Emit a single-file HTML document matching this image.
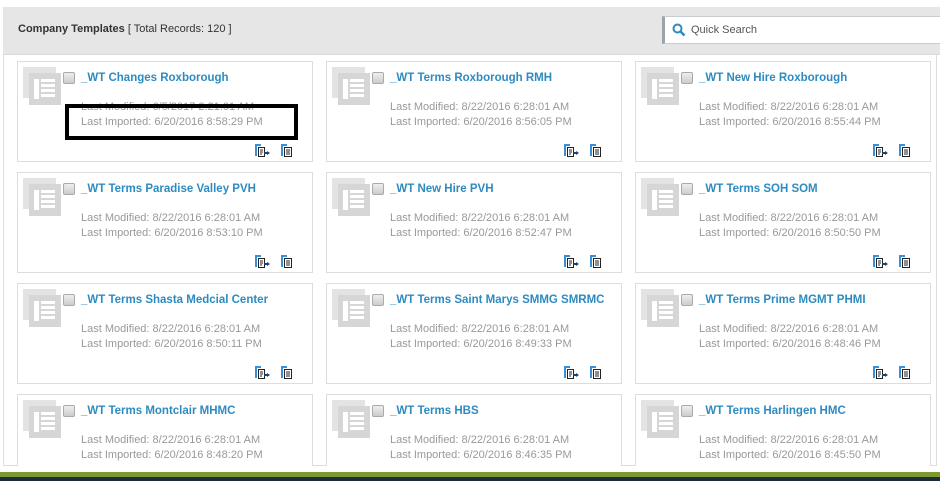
<!DOCTYPE html>
<html><head><meta charset="utf-8"><style>
*{margin:0;padding:0;box-sizing:border-box}
body{width:940px;height:481px;overflow:hidden;background:#fff;font-family:"Liberation Sans",sans-serif;position:relative}
.panel{position:absolute;left:3px;top:7px;width:934px;height:459px;border:1px solid #ddd;border-top:none;background:#fff}
.hdr{position:absolute;left:3px;top:7px;width:937px;height:48px;background:#e6e6e6;border-bottom:1px solid #d8d8d8}
.hdr .t{position:absolute;left:15px;top:16px;font-size:11px;color:#333}
.hdr b{color:#333}
.search{position:absolute;left:662px;top:16px;width:280px;height:28px;background:#fff;border:1px solid #c9cdd0;border-left:3px solid #9aa4ab}
.search span{position:absolute;left:26px;top:7px;font-size:11px;color:#555}
.card{position:absolute;width:296px;height:101px;border:1px solid #ddd;background:#fff}
.b1{position:absolute;left:5px;top:5px;width:33px;height:31px;background:#e3e3e3}
.b2{position:absolute;left:11px;top:11px;width:32px;height:32px;background:#d6d6d6}
.b2::before{content:"";position:absolute;left:5px;top:6px;width:5px;height:20px;background:#fff}
.b2::after{content:"";position:absolute;left:12px;top:6px;width:14px;height:20px;background:repeating-linear-gradient(#fff 0 3px,#d6d6d6 3px 5px)}
.cb{position:absolute;left:45px;top:10px;width:12px;height:12px;border:1px solid #aaa;border-radius:2px;background:linear-gradient(#eee,#ccc)}
.ti{position:absolute;left:63px;top:10px;font-size:11.5px;font-weight:bold;color:#2e8bc0;white-space:nowrap}
.m{position:absolute;left:63px;top:38px;font-size:11px;color:#999;line-height:15px;white-space:nowrap}
.ic{position:absolute;top:82px}
.green{position:absolute;left:0;top:472px;width:940px;height:5px;background:#7b9a32}
.dark{position:absolute;left:0;top:477px;width:940px;height:4px;background:#1f2b37}
.box{position:absolute;left:65px;top:104px;width:233px;height:36px;border:4px solid #000}
</style></head><body>
<div class="panel"></div>
<div class="hdr"><div class="t"><b>Company Templates</b> [ Total Records: 120 ]</div></div>
<div class="search"><svg style="position:absolute;left:7px;top:6px" width="14" height="14" viewBox="0 0 14 14"><circle cx="5.5" cy="5.5" r="4" fill="none" stroke="#2e8bc0" stroke-width="2"/><path d="M8.5 8.5L12.5 12.5" stroke="#2e8bc0" stroke-width="2.5"/></svg><span>Quick Search</span></div>

<svg width="0" height="0" style="position:absolute"><defs>
<g id="i1"><path d="M0 0h6v2H2v10H0z" fill="#3b8fd8"/><path d="M3.5 3.5h6v9h-6z" fill="#fff" stroke="#222" stroke-width="1"/><path d="M5 6h3M5 8h3M5 10h2" stroke="#222"/><path d="M9 9h4" stroke="#1f3f7a" stroke-width="2"/><path d="M12 7l3 2-3 2z" fill="#1f3f7a"/></g>
<g id="i2"><path d="M0 0h6v2H2v10H0z" fill="#3b8fd8"/><path d="M3.5 3.5h7v9h-7z" fill="#fff" stroke="#222"/><path d="M5 6h4M5 8h4M5 10h4" stroke="#222"/></g>
</defs></svg>

<div class="card" style="left:17px;top:61px"><div class="b1"></div><div class="b2"></div><div class="cb"></div><div class="ti">_WT Changes Roxborough</div><div class="m">Last Modified: 6/5/2017 2:21:01 AM<br>Last Imported: 6/20/2016 8:58:29 PM</div><svg class="ic" style="left:237px" width="16" height="13"><use href="#i1"/></svg><svg class="ic" style="left:263px" width="12" height="13"><use href="#i2"/></svg></div>
<div class="card" style="left:326px;top:61px"><div class="b1"></div><div class="b2"></div><div class="cb"></div><div class="ti">_WT Terms Roxborough RMH</div><div class="m">Last Modified: 8/22/2016 6:28:01 AM<br>Last Imported: 6/20/2016 8:56:05 PM</div><svg class="ic" style="left:237px" width="16" height="13"><use href="#i1"/></svg><svg class="ic" style="left:263px" width="12" height="13"><use href="#i2"/></svg></div>
<div class="card" style="left:635px;top:61px"><div class="b1"></div><div class="b2"></div><div class="cb"></div><div class="ti">_WT New Hire Roxborough</div><div class="m">Last Modified: 8/22/2016 6:28:01 AM<br>Last Imported: 6/20/2016 8:55:44 PM</div><svg class="ic" style="left:237px" width="16" height="13"><use href="#i1"/></svg><svg class="ic" style="left:263px" width="12" height="13"><use href="#i2"/></svg></div>

<div class="card" style="left:17px;top:172px"><div class="b1"></div><div class="b2"></div><div class="cb"></div><div class="ti">_WT Terms Paradise Valley PVH</div><div class="m">Last Modified: 8/22/2016 6:28:01 AM<br>Last Imported: 6/20/2016 8:53:10 PM</div><svg class="ic" style="left:237px" width="16" height="13"><use href="#i1"/></svg><svg class="ic" style="left:263px" width="12" height="13"><use href="#i2"/></svg></div>
<div class="card" style="left:326px;top:172px"><div class="b1"></div><div class="b2"></div><div class="cb"></div><div class="ti">_WT New Hire PVH</div><div class="m">Last Modified: 8/22/2016 6:28:01 AM<br>Last Imported: 6/20/2016 8:52:47 PM</div><svg class="ic" style="left:237px" width="16" height="13"><use href="#i1"/></svg><svg class="ic" style="left:263px" width="12" height="13"><use href="#i2"/></svg></div>
<div class="card" style="left:635px;top:172px"><div class="b1"></div><div class="b2"></div><div class="cb"></div><div class="ti">_WT Terms SOH SOM</div><div class="m">Last Modified: 8/22/2016 6:28:01 AM<br>Last Imported: 6/20/2016 8:50:50 PM</div><svg class="ic" style="left:237px" width="16" height="13"><use href="#i1"/></svg><svg class="ic" style="left:263px" width="12" height="13"><use href="#i2"/></svg></div>

<div class="card" style="left:17px;top:283px"><div class="b1"></div><div class="b2"></div><div class="cb"></div><div class="ti">_WT Terms Shasta Medcial Center</div><div class="m">Last Modified: 8/22/2016 6:28:01 AM<br>Last Imported: 6/20/2016 8:50:11 PM</div><svg class="ic" style="left:237px" width="16" height="13"><use href="#i1"/></svg><svg class="ic" style="left:263px" width="12" height="13"><use href="#i2"/></svg></div>
<div class="card" style="left:326px;top:283px"><div class="b1"></div><div class="b2"></div><div class="cb"></div><div class="ti">_WT Terms Saint Marys SMMG SMRMC</div><div class="m">Last Modified: 8/22/2016 6:28:01 AM<br>Last Imported: 6/20/2016 8:49:33 PM</div><svg class="ic" style="left:237px" width="16" height="13"><use href="#i1"/></svg><svg class="ic" style="left:263px" width="12" height="13"><use href="#i2"/></svg></div>
<div class="card" style="left:635px;top:283px"><div class="b1"></div><div class="b2"></div><div class="cb"></div><div class="ti">_WT Terms Prime MGMT PHMI</div><div class="m">Last Modified: 8/22/2016 6:28:01 AM<br>Last Imported: 6/20/2016 8:48:46 PM</div><svg class="ic" style="left:237px" width="16" height="13"><use href="#i1"/></svg><svg class="ic" style="left:263px" width="12" height="13"><use href="#i2"/></svg></div>

<div class="card" style="left:17px;top:394px;height:72px;border-bottom:none"><div class="b1"></div><div class="b2"></div><div class="cb"></div><div class="ti">_WT Terms Montclair MHMC</div><div class="m">Last Modified: 8/22/2016 6:28:01 AM<br>Last Imported: 6/20/2016 8:48:20 PM</div></div>
<div class="card" style="left:326px;top:394px;height:72px;border-bottom:none"><div class="b1"></div><div class="b2"></div><div class="cb"></div><div class="ti">_WT Terms HBS</div><div class="m">Last Modified: 8/22/2016 6:28:01 AM<br>Last Imported: 6/20/2016 8:46:35 PM</div></div>
<div class="card" style="left:635px;top:394px;height:72px;border-bottom:none"><div class="b1"></div><div class="b2"></div><div class="cb"></div><div class="ti">_WT Terms Harlingen HMC</div><div class="m">Last Modified: 8/22/2016 6:28:01 AM<br>Last Imported: 6/20/2016 8:45:50 PM</div></div>

<div class="box"></div>
<div class="green"></div><div class="dark"></div>
</body></html>
